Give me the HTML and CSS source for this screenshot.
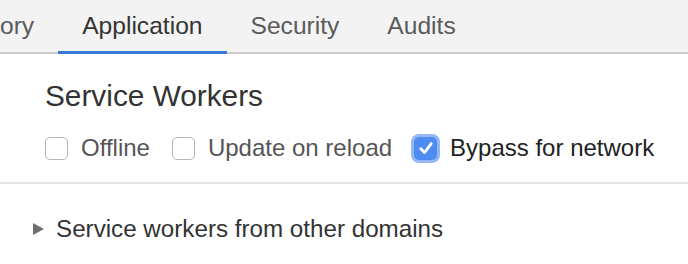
FILE: index.html
```html
<!DOCTYPE html>
<html>
<head>
<meta charset="utf-8">
<link rel="stylesheet" href="styles.css">
</head>
<body>
<div class="tabbar">
  <div class="tab tab-clipped">ory</div>
  <div class="tab tab-active">Application</div>
  <div class="tab">Security</div>
  <div class="tab">Audits</div>
</div>
<div class="section">
  <div class="heading">Service Workers</div>
  <div class="options">
    <label class="option"><span class="box"></span><span class="label">Offline</span></label>
    <label class="option"><span class="box"></span><span class="label">Update on reload</span></label>
    <label class="option option-checked"><span class="box box-checked"><svg viewBox="0 0 22 22" width="22" height="22"><path d="M5.8 11.8 L9.5 15.6 L16.2 6.6" fill="none" stroke="#fff" stroke-width="2.8" stroke-linecap="round" stroke-linejoin="round"/></svg></span><span class="label">Bypass for network</span></label>
  </div>
</div>
<div class="disclosure">
  <span class="triangle"></span>
  <span class="disclosure-text">Service workers from other domains</span>
</div>
</body>
</html>
```
FILE: styles.css
```css
html, body {
  margin: 0;
  padding: 0;
  background: #ffffff;
  font-family: "Liberation Sans", Arial, sans-serif;
}

.tabbar {
  display: flex;
  height: 52px;
  background: #f3f3f3;
  border-bottom: 2px solid #cbcbcb;
}

.tab {
  box-sizing: border-box;
  height: 54px;
  margin-bottom: -2px;
  padding: 1px 24px 0;
  border-bottom: 3px solid transparent;
  display: flex;
  align-items: center;
  font-size: 24.6px;
  color: #5a5a5a;
  white-space: nowrap;
}

.tab-clipped {
  padding-left: 0;
  padding-right: 24px;
}

.tab-active {
  color: #333333;
  border-bottom-color: #3879d9;
}

.section {
  padding: 25px 0 22px 45px;
  border-bottom: 2px solid #e4e4e4;
}

.heading {
  font-size: 29.8px;
  line-height: 34px;
  color: #333333;
}

.options {
  display: flex;
  align-items: center;
  gap: 22px;
  margin-top: 23px;
  height: 24px;
}

.option {
  display: flex;
  align-items: center;
  gap: 13px;
  font-size: 24px;
  color: #555555;
}

.box {
  box-sizing: border-box;
  width: 23px;
  height: 23px;
  border: 1px solid #b4b4b4;
  border-radius: 5px;
  background: #ffffff;
  display: flex;
  align-items: center;
  justify-content: center;
}

.box-checked {
  border: none;
  background: #4e8cf2;
  box-shadow: 0 0 0 3px #93b8f5;
}

.option-checked {
  color: #222222;
}

.disclosure {
  display: flex;
  align-items: center;
  padding: 31px 0 0 33px;
  height: 28px;
}

.triangle {
  width: 0;
  height: 0;
  border-top: 6.5px solid transparent;
  border-bottom: 6.5px solid transparent;
  border-left: 11px solid #6e6e6e;
  margin-right: 12px;
}

.disclosure-text {
  font-size: 24.2px;
  color: #333333;
}
```
